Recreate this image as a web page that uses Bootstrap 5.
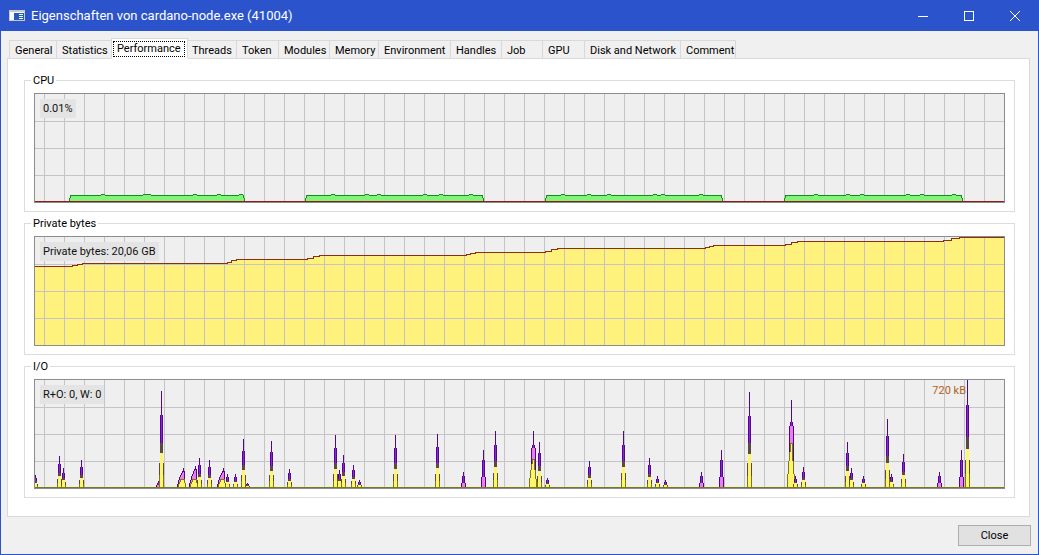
<!DOCTYPE html>
<html lang="en">
<head>
<meta charset="UTF-8">
<title>Eigenschaften von cardano-node.exe (41004)</title>
<link href="https://cdn.jsdelivr.net/npm/bootstrap@5.3.0/dist/css/bootstrap.min.css" rel="stylesheet">
<style>
  html, body { height: 100%; }
  body { background: #f0f0f0; font-family: Roboto, "Liberation Sans", sans-serif; font-size: 11px; color: #000; overflow: hidden; }
  .win { height: 555px; width: 1039px; border: 1px solid #2b54cc; border-top: 0; }
  .titlebar { height: 31px; background: #2b54cc; color: #fff; font-size: 13px; padding: 0 1px 0 9px; margin: 0 -1px; }
  .titlebar .wtitle { margin-left: 6px; }
  .wbtn { width: 46px; height: 31px; display: flex; align-items: center; justify-content: center; }
  .tabstrip { padding: 7px 0 0 8px; flex-wrap: nowrap; position: relative; z-index: 1; align-items: flex-end; }
  .tabstrip .tabitem { height: 19px; background: #f0f0f0; border: 1px solid #d9d9d9; border-left-width: 0; padding: 2px 0 0 5px; line-height: 15px; white-space: nowrap; }
  .tabstrip .tabitem:first-child { border-left-width: 1px; }
  .tabstrip .tabitem.on { background: #fff; height: 21px; border-left-width: 1px; border-bottom-color: #fff; margin: 0 -1px; padding: 2px 0 0 1px; position: relative; z-index: 2; }
  .tabstrip .tabitem.on span { display: block; border: 1px dotted #000; padding: 0 0 0 3px; margin-right: 2px; line-height: 14px; }
  .tabpage { height: 459px; margin: -1px 8px 0 6px; background: #fff; border: 1px solid #d9d9d9; padding: 21px 14px 18px 16px; gap: 11px; }
  .gbox { height: 132px; border: 1px solid #dcdcdc; padding: 12px 10px 7px 9px; position: relative; }
  .gbox .gtitle { position: absolute; left: 6px; top: -8px; background: #fff; padding: 0 2px; line-height: 15px; }
  .graph { position: relative; height: 110px; width: 971px; }
  .graph svg { display: block; }
  .glabel { position: absolute; left: 6px; top: 6px; background: #e4e4e4; padding: 2px 3px; line-height: 15px; color: #111; }
  .gmax { position: absolute; right: 39px; top: 4px; color: #b45f20; line-height: 15px; }
  .footbar { padding: 8px 7px 0 0; }
  .closebtn { width: 73px; height: 21px; padding: 0; font-size: 11px; line-height: 19px; background: #e1e1e1; border: 1px solid #adadad; border-radius: 0; color: #000; }
</style>
</head>
<body>
<div class="win d-flex flex-column">
  <div class="titlebar d-flex align-items-center">
    <svg width="16" height="11" viewBox="0 0 16 11"><rect width="16" height="11" fill="#c9c9c9"/><rect x="1" y="2" width="14" height="8" fill="#fff"/><rect x="5" y="3" width="10" height="7" fill="#1f5fb5"/><rect x="10" y="4" width="4" height="1" fill="#fff"/><rect x="10" y="6" width="4" height="1" fill="#fff"/><rect x="10" y="8" width="4" height="1" fill="#fff"/></svg>
    <span class="wtitle flex-grow-1">Eigenschaften von cardano-node.exe (41004)</span>
    <div class="wbtn"><svg width="10" height="10"><rect x="0" y="5" width="10" height="1" fill="#fff"/></svg></div>
    <div class="wbtn"><svg width="10" height="10"><rect x=".5" y=".5" width="9" height="9" fill="none" stroke="#fff"/></svg></div>
    <div class="wbtn"><svg width="10" height="10"><path d="M0 0L10 10M10 0L0 10" stroke="#fff" fill="none"/></svg></div>
  </div>
  <div class="tabstrip nav" id="tabs"></div>
  <div class="tabpage d-flex flex-column">
    <div class="gbox"><div class="gtitle">CPU</div><div class="graph" id="cpu"></div></div>
    <div class="gbox"><div class="gtitle">Private bytes</div><div class="graph" id="mem"></div></div>
    <div class="gbox"><div class="gtitle">I/O</div><div class="graph" id="io"></div></div>
  </div>
  <div class="footbar d-flex justify-content-end"><button type="button" class="btn closebtn">Close</button></div>
</div>
<script src="https://cdn.jsdelivr.net/npm/bootstrap@5.3.0/dist/js/bootstrap.bundle.min.js"></script>
<script>
const tabs = [["General",48],["Statistics",55],["Performance",75],["Threads",50],["Token",42],["Modules",51],["Memory",49],["Environment",72],["Handles",51],["Job",41],["GPU",42],["Disk and Network",96],["Comment",55]];
document.getElementById('tabs').innerHTML = tabs.map(([t,w]) => t === 'Performance'
  ? `<div class="tabitem on" style="width:${w+2}px"><span>${t}</span></div>`
  : `<div class="tabitem" style="width:${w}px">${t}</div>`).join('');

// chart coordinates are page pixels minus graph origin
const W = 971, H = 110, base = 108;
const bg = `<rect width="${W}" height="${H}" fill="#efefef"/>`;
function gridLines(opacity) {
  let s = '';
  for (let x = 10; x < W; x += 20) s += `<rect x="${x}" y="0" width="1" height="${H}" fill="#c4c4c8" opacity="${opacity}"/>`;
  for (let y = 28; y < H; y += 27) s += `<rect x="0" y="${y}" width="${W}" height="1" fill="#c4c4c8" opacity="${opacity}"/>`;
  return s;
}
const frame = `<rect x=".5" y=".5" width="${W-1}" height="${H-1}" fill="none" stroke="#8c8c8c"/>`;
function svg(inner) { return `<svg width="${W}" height="${H}" shape-rendering="crispEdges">${inner}${frame}</svg>`; }

// CPU
const plateaus = [[35,211],[271,450],[511,689],[750,929]];
let cpuFill = '', cpuLine = '';
plateaus.forEach(([a,b]) => {
  const p = [[a,base],[a+1,105],[a+2,102]];
  for (let x = a+4; x < b-3; x += 2) p.push([x, (x*7 % 23 === 0 || x*11 % 37 === 0) ? 101 : 102]);
  p.push([b-2,102],[b-1,105],[b,base]);
  const pts = p.map(q => q.join(',')).join(' ');
  cpuFill += `<polygon points="${pts}" fill="#7ff57a"/>`;
  cpuLine += `<polyline points="${pts}" fill="none" stroke="#178a1c"/>`;
});
document.getElementById('cpu').innerHTML = svg(bg + gridLines(1) + cpuFill + gridLines(.35) + cpuLine + `<rect x="0" y="${base}" width="${W}" height="1" fill="#8a1f10"/>`) + '<div class="glabel">0.01%</div>';

// private bytes, each rise is drawn in three steps
const memLevels = [30,27,23,19,16,12,9,5,1];
const memRises = [[38,53],[193,206],[273,291],[432,445],[511,529],[671,683],[751,769],[909,933]];
let memPath = `M0 ${memLevels[0]}`;
memRises.forEach(([a,b],i) => {
  const from = memLevels[i], to = memLevels[i+1];
  for (let k = 0; k < 3; k++) {
    const x = Math.round(a + (b-a)*k/3), y = Math.round(from + (to-from)*(k+1)/3);
    memPath += `H${x}V${y}`;
  }
  memPath += `H${b}`;
});
memPath += `H${W}`;
document.getElementById('mem').innerHTML = svg(bg + `<path d="${memPath}V${H}H0Z" fill="#fff27c"/>` + gridLines(1) + `<path d="${memPath}" fill="none" stroke="#8a3010"/>`) + '<div class="glabel">Private bytes: 20,06 GB</div>';

// I/O spikes: [page x, height, kind], y = read and write, p = purple only, b = with slope, t = tall with slope
const spikes = [[35,12,'y'],[59,31,'y'],[63,19,'y'],[81,27,'y'],[158,6,'p'],[161,96,'y'],[183,19,'b'],[195,21,'b'],[199,29,'y'],[209,27,'y'],[223,19,'b'],[227,13,'y'],[235,13,'y'],[243,48,'y'],[247,4,'y'],[271,46,'y'],[289,18,'y'],[335,52,'y'],[339,17,'y'],[343,32,'y'],[353,22,'y'],[359,7,'y'],[395,52,'y'],[437,53,'y'],[463,15,'p'],[483,37,'p'],[495,56,'y'],[533,56,'t'],[539,45,'y'],[547,9,'y'],[589,26,'y'],[623,56,'y'],[649,29,'y'],[657,11,'y'],[665,7,'y'],[701,15,'p'],[721,37,'p'],[749,95,'y'],[791,87,'t'],[795,11,'y'],[803,20,'y'],[847,45,'y'],[851,19,'y'],[863,11,'y'],[887,68,'y'],[891,13,'y'],[903,33,'y'],[939,15,'p'],[961,37,'p'],[967,109,'y']];
const DARK = '#4b0a8c', MAG = '#f07af0', VIO = '#9a1ee0', YEL = '#fff56a', OLI = '#7a7a10', MUD = '#5a4a40';
function box(x, y1, y2, w, c) { return `<rect x="${x}" y="${y1}" width="${w}" height="${Math.max(y2-y1,0)}" fill="${c}"/>`; }
function spike([px, h, kind]) {
  const x = px - 34, lv = f => base - Math.round(h * f);
  let s = box(x, base-h, base, 1, DARK);
  if (kind === 'p') {
    s += box(x-1, lv(.72), base, 3, DARK) + box(x, lv(.72), base, 1, VIO);
    s += box(x-2, lv(.28), base, 5, DARK) + box(x-1, lv(.28), base, 3, MAG);
    return s;
  }
  s += box(x-1, lv(.75), lv(.46), 3, DARK) + box(x, lv(.75), lv(.46), 1, VIO);
  if (kind === 'b') {
    s += `<polygon points="${x-6},${base} ${x-3},${lv(.5)} ${x},${lv(.85)} ${x+1},${lv(.85)} ${x+2},${base}" fill="${MAG}" stroke="${DARK}"/>`;
    s += box(x, base-h, lv(.8), 1, DARK);
    s += `<polygon points="${x-5},${base} ${x-2},${lv(.4)} ${x+1},${lv(.4)} ${x+3},${base}" fill="${YEL}" stroke="${OLI}"/>`;
    return s;
  }
  if (kind === 't') {
    s += box(x-2, lv(.7), lv(.3), 5, DARK) + box(x-1, lv(.7), lv(.3), 3, MAG);
    s += `<polygon points="${x-4},${base} ${x-2},${lv(.3)} ${x},${lv(.5)} ${x+1},${lv(.5)} ${x+2},${lv(.3)} ${x+4},${base}" fill="${YEL}" stroke="${OLI}"/>`;
    return s;
  }
  s += box(x-1, lv(.46), lv(.35), 3, MUD);
  s += box(x-2, lv(.25), lv(.12), 5, MUD) + box(x-2, lv(.12), base, 5, OLI);
  s += box(x-1, lv(.35), base, 3, YEL);
  return s;
}
document.getElementById('io').innerHTML = svg(bg + gridLines(1) + spikes.map(spike).join('') + `<rect x="0" y="${base}" width="${W}" height="1" fill="#7a7a10"/>`) + '<div class="glabel">R+O: 0, W: 0</div><div class="gmax">720 kB</div>';
</script>
</body>
</html>
